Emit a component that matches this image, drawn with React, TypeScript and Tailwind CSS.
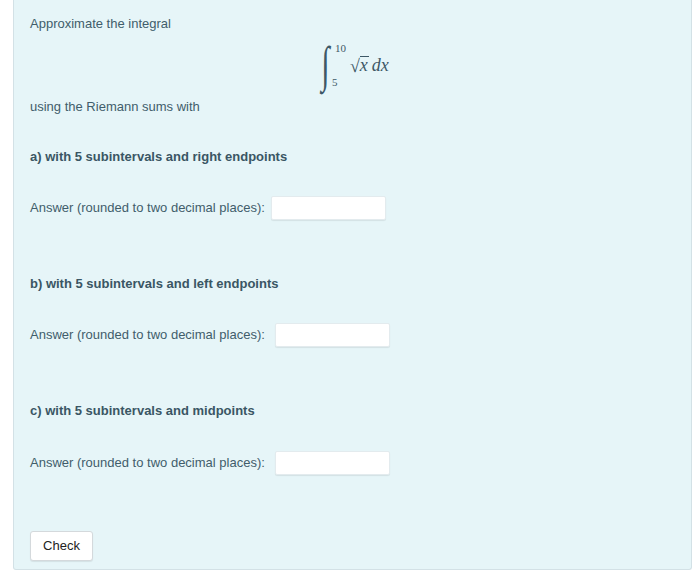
import React from "react";

const font = { fontFamily: '"Liberation Sans", Arial, sans-serif' };

function AnswerRow({ gap }: { gap: string }) {
  return (
    <div className="flex h-[24px] items-center">
      <span>Answer (rounded to two decimal places):</span>
      <input
        type="text"
        className={`${gap} h-[24px] w-[115px] rounded-[2px] border border-[#e3ebee] bg-white shadow-[0_1px_1px_rgba(0,0,0,0.08)] outline-none`}
      />
    </div>
  );
}

export default function App() {
  return (
    <div className="min-h-[578px] bg-white pl-[13px] pr-[8px]" style={font}>
      <div className="rounded-b-[3px] border border-t-0 border-[#d3e1e6] bg-[#e6f5f8] pb-[8px] pl-[16px] pt-[15px] text-[13px] leading-[18px] text-[#415d6b]">
        <p className="h-[18px]">Approximate the integral</p>

        <div className="mt-[9px] flex h-[46px] pl-[290px] text-[#3d5866]" style={{ fontFamily: '"Liberation Serif", "Times New Roman", serif' }}>
          <span className="flex items-center text-[40px] leading-none scale-y-[1.25] scale-x-[0.75] -mt-[1px]">∫</span>
          <div className="ml-[1px] flex flex-col justify-between text-[11px] leading-[12px]">
            <span className="ml-[3px]">10</span>
            <span>5</span>
          </div>
          <div className="ml-[4px] flex items-center text-[18px] leading-none">
            <span className="mt-[1px]">√</span>
            <span className="border-t border-[#3d5866] italic leading-[17px] pr-[1px]">x</span>
            <span className="ml-[3px] italic">dx</span>
          </div>
        </div>

        <p className="mt-[10px] h-[18px]">using the Riemann sums with</p>

        <p className="mt-[32px] h-[18px] font-bold text-[#3a5664]">a) with 5 subintervals and right endpoints</p>
        <div className="mt-[30px]">
          <AnswerRow gap="ml-[6px]" />
        </div>

        <p className="mt-[55px] h-[18px] font-bold text-[#3a5664]">b) with 5 subintervals and left endpoints</p>
        <div className="mt-[30px]">
          <AnswerRow gap="ml-[10px]" />
        </div>

        <p className="mt-[55px] h-[18px] font-bold text-[#3a5664]">c) with 5 subintervals and midpoints</p>
        <div className="mt-[31px]">
          <AnswerRow gap="ml-[10px]" />
        </div>

        <button className="mt-[56px] h-[30px] w-[63px] rounded-[3px] border border-[#d4d9dc] bg-white text-[13px] text-[#222] shadow-[0_1px_1px_rgba(0,0,0,0.08)]">
          Check
        </button>
      </div>
    </div>
  );
}
